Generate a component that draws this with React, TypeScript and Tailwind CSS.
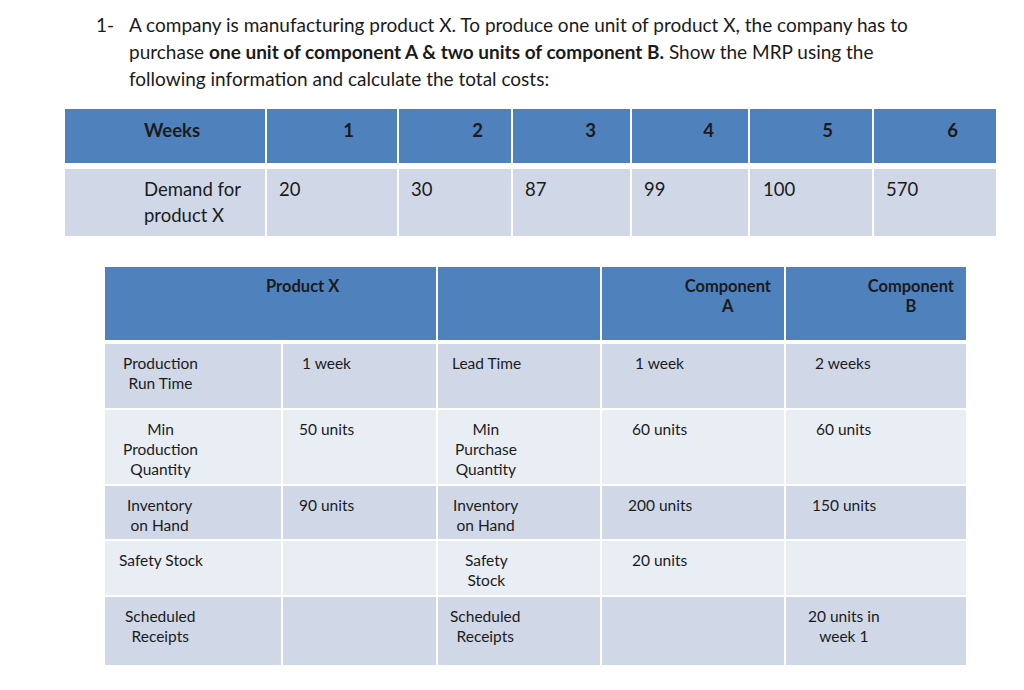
import React from 'react'

const dark = 'bg-[#d0d8e8]'
const light = 'bg-[#e9edf4]'

function App() {
    return (
        <div className='w-[1024px] h-[690px] bg-white text-[#1b1b1b] overflow-hidden' style={{ fontFamily: 'Lato, "Open Sans", sans-serif' }}>
            {/* question text */}
            <div className='flex pt-[11px] pl-[96px] text-[19px] leading-[27px]'>
                <div className='w-[33px]'>1-</div>
                <div className='whitespace-nowrap'>
                    A company is manufacturing product X. To produce one unit of product X, the company has to<br />
                    purchase <b>one unit of component A &amp; two units of component B.</b> Show the MRP using the<br />
                    following information and calculate the total costs:
                </div>
            </div>

            {/* weeks table */}
            <div className='ml-[65px] mt-[17px] w-[931px] grid grid-cols-[200px_130px_112px_117px_116px_122px_122px] gap-x-[2px] gap-y-[6px] text-[18.5px]'>
                <div className='h-[54px] bg-[#4f81bd] font-bold pl-[79px] pt-[8px]'>Weeks</div>
                <div className='h-[54px] bg-[#4f81bd] font-bold text-right pr-[43px] pt-[8px]'>1</div>
                <div className='h-[54px] bg-[#4f81bd] font-bold text-right pr-[28px] pt-[8px]'>2</div>
                <div className='h-[54px] bg-[#4f81bd] font-bold text-right pr-[34px] pt-[8px]'>3</div>
                <div className='h-[54px] bg-[#4f81bd] font-bold text-right pr-[34px] pt-[8px]'>4</div>
                <div className='h-[54px] bg-[#4f81bd] font-bold text-right pr-[39px] pt-[8px]'>5</div>
                <div className='h-[54px] bg-[#4f81bd] font-bold text-right pr-[38px] pt-[8px]'>6</div>
                <div className={`h-[67px] ${dark} pl-[79px] pt-[7px] leading-[26px]`}>Demand for<br />product X</div>
                <div className={`h-[67px] ${dark} pl-[12px] pt-[7px] leading-[26px]`}>20</div>
                <div className={`h-[67px] ${dark} pl-[12px] pt-[7px] leading-[26px]`}>30</div>
                <div className={`h-[67px] ${dark} pl-[12px] pt-[7px] leading-[26px]`}>87</div>
                <div className={`h-[67px] ${dark} pl-[12px] pt-[7px] leading-[26px]`}>99</div>
                <div className={`h-[67px] ${dark} pl-[13px] pt-[7px] leading-[26px]`}>100</div>
                <div className={`h-[67px] ${dark} pl-[12px] pt-[7px] leading-[26px]`}>570</div>
            </div>

            {/* MRP data table */}
            <div className='ml-[105px] mt-[31px] w-[861px] grid grid-cols-[176px_153px_162px_182px_180px] gap-x-[2px] gap-y-[2px] text-[15.5px] leading-[20px]'>
                <div className='col-span-2 h-[73px] bg-[#4f81bd] font-bold text-[16.5px] pl-[161px] pt-[9px] mb-[2px]'>Product X</div>
                <div className='h-[73px] bg-[#4f81bd] mb-[2px]'></div>
                <div className='h-[73px] bg-[#4f81bd] font-bold text-[16.5px] flex justify-end pr-[13px] pt-[9px] mb-[2px]'><div className='text-center'>Component<br />A</div></div>
                <div className='h-[73px] bg-[#4f81bd] font-bold text-[16.5px] flex justify-end pr-[12px] pt-[9px] mb-[2px]'><div className='text-center'>Component<br />B</div></div>

                <div className={`h-[64px] ${dark} pl-[18px] pt-[9px]`}><div className='inline-block text-center'>Production<br />Run Time</div></div>
                <div className={`h-[64px] ${dark} pl-[19px] pt-[9px]`}>1 week</div>
                <div className={`h-[64px] ${dark} pl-[14px] pt-[9px]`}>Lead Time</div>
                <div className={`h-[64px] ${dark} pl-[33px] pt-[9px]`}>1 week</div>
                <div className={`h-[64px] ${dark} pl-[29px] pt-[9px]`}>2 weeks</div>

                <div className={`h-[74px] ${light} pl-[18px] pt-[9px]`}><div className='inline-block text-center'>Min<br />Production<br />Quantity</div></div>
                <div className={`h-[74px] ${light} pl-[16px] pt-[9px]`}>50 units</div>
                <div className={`h-[74px] ${light} pl-[17px] pt-[9px]`}><div className='inline-block text-center'>Min<br />Purchase<br />Quantity</div></div>
                <div className={`h-[74px] ${light} pl-[30px] pt-[9px]`}>60 units</div>
                <div className={`h-[74px] ${light} pl-[30px] pt-[9px]`}>60 units</div>

                <div className={`h-[53px] ${dark} pl-[22px] pt-[9px]`}><div className='inline-block text-center'>Inventory<br />on Hand</div></div>
                <div className={`h-[53px] ${dark} pl-[16px] pt-[9px]`}>90 units</div>
                <div className={`h-[53px] ${dark} pl-[15px] pt-[9px]`}><div className='inline-block text-center'>Inventory<br />on Hand</div></div>
                <div className={`h-[53px] ${dark} pl-[26px] pt-[9px]`}>200 units</div>
                <div className={`h-[53px] ${dark} pl-[26px] pt-[9px]`}>150 units</div>

                <div className={`h-[54px] ${light} pl-[14px] pt-[9px]`}>Safety Stock</div>
                <div className={`h-[54px] ${light}`}></div>
                <div className={`h-[54px] ${light} pl-[27px] pt-[9px]`}><div className='inline-block text-center'>Safety<br />Stock</div></div>
                <div className={`h-[54px] ${light} pl-[30px] pt-[9px]`}>20 units</div>
                <div className={`h-[54px] ${light}`}></div>

                <div className={`h-[68px] ${dark} pl-[20px] pt-[9px]`}><div className='inline-block text-center'>Scheduled<br />Receipts</div></div>
                <div className={`h-[68px] ${dark}`}></div>
                <div className={`h-[68px] ${dark} pl-[12px] pt-[9px]`}><div className='inline-block text-center'>Scheduled<br />Receipts</div></div>
                <div className={`h-[68px] ${dark}`}></div>
                <div className={`h-[68px] ${dark} pl-[22px] pt-[9px]`}><div className='inline-block text-center'>20 units in<br />week 1</div></div>
            </div>
        </div>
    )
}

export default App
